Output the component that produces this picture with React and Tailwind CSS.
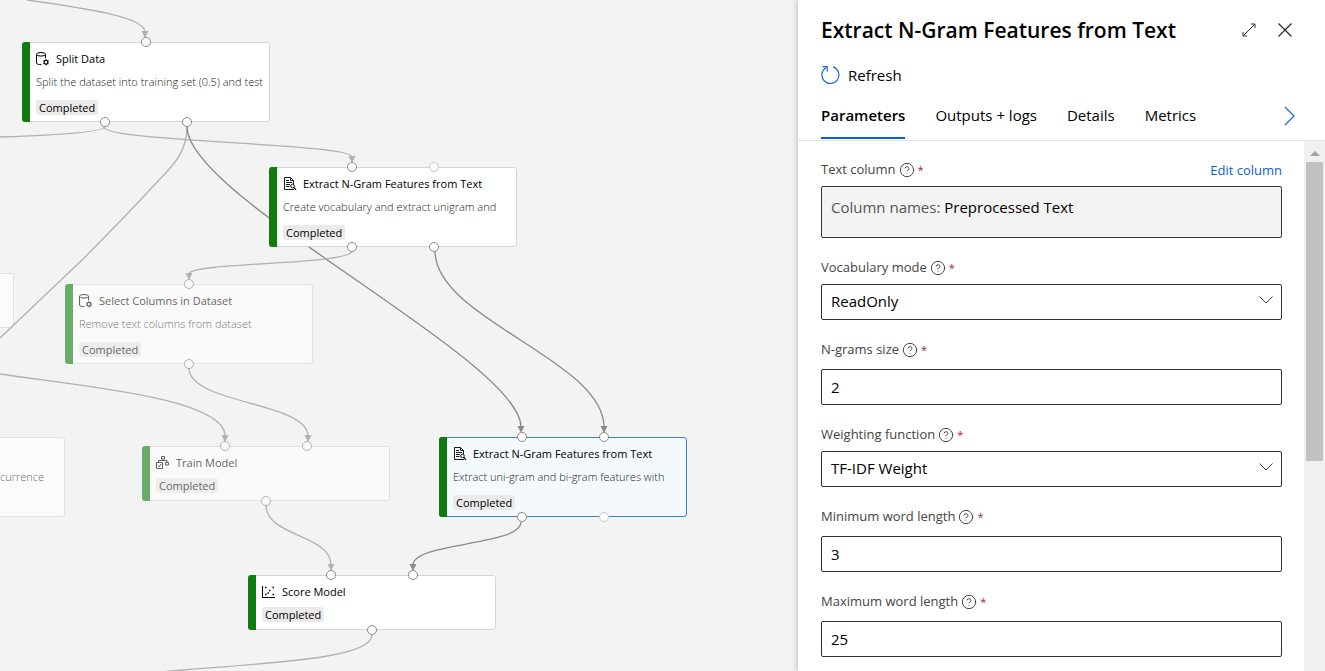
import { useState } from "react";
import { CircleQuestionMark } from "lucide-react";

const DIM = "#b1b1b1";
const STRONG = "#8a8a8a";

const edges = [
  { d: "M27 0 C85 8 145 17 145 32", color: DIM, tip: [145, 38] },
  { d: "M104 127 C104 132 60 135 0 137", color: DIM },
  { d: "M104 127 C104 142 352 143 352 157", color: DIM, tip: [352, 163] },
  { d: "M187 127 C187 150 175 164 159 180 C135 206 110 232 82 260 L0 338", color: DIM },
  { d: "M187 127 C187 198 521 360 521 427", color: STRONG, tip: [521, 433] },
  { d: "M435 251 C435 319 604 360 604 427", color: STRONG, tip: [604, 433] },
  { d: "M352 251 C352 265 189 262 189 274", color: DIM, tip: [189, 280] },
  { d: "M189 368 C189 404 308 402 308 436", color: DIM, tip: [308, 442] },
  { d: "M0 374 C80 386 225 398 225 436", color: DIM, tip: [225, 442] },
  { d: "M266 505 C266 537 331 534 331 565", color: DIM, tip: [331, 571] },
  { d: "M521 522 C521 546 413 542 413 565", color: STRONG, tip: [413, 571] },
  { d: "M372 635 C372 660 260 663 160 672", color: DIM },
];

const nodes = [
  {
    id: "split", title: "Split Data", icon: "data", place: "left-[22px] top-[42px]",
    text: "Split the dataset into training set (0.5) and test",
    inputs: ["left-1/2"], outputs: ["left-1/3", "left-2/3"],
  },
  {
    id: "ngram1", title: "Extract N-Gram Features from Text", icon: "doc", place: "left-[269px] top-[167px]",
    text: "Create vocabulary and extract unigram and",
    inputs: ["left-1/3", "left-2/3"], outputs: ["left-1/3", "left-2/3"], faintInput: 1,
  },
  {
    id: "select", title: "Select Columns in Dataset", icon: "data", place: "left-[65px] top-[284px]", dim: true,
    text: "Remove text columns from dataset",
    inputs: ["left-1/2"], outputs: ["left-1/2"],
  },
  {
    id: "train", title: "Train Model", icon: "train", place: "left-[142px] top-[446px]", dim: true,
    inputs: ["left-1/3", "left-2/3"], outputs: ["left-1/2"],
  },
  {
    id: "ngram2", title: "Extract N-Gram Features from Text", icon: "doc", place: "left-[439px] top-[437px]", selected: true,
    text: "Extract uni-gram and bi-gram features with",
    inputs: ["left-1/3", "left-2/3"], outputs: ["left-1/3", "left-2/3"], faintOutput: 1,
  },
  {
    id: "score", title: "Score Model", icon: "score", place: "left-[248px] top-[575px]",
    inputs: ["left-1/3", "left-2/3"], outputs: ["left-1/2"],
  },
];

function NodeIcon({ name }) {
  const props = {
    viewBox: "0 0 14 14", fill: "none", stroke: "currentColor", strokeWidth: 1, className: "w-3.5 h-3.5 shrink-0",
    "aria-hidden": true,
  };
  if (name === "data") {
    return (
      <svg {...props}>
        <ellipse cx="5" cy="2.300" rx="4.500" ry="1.800" />
        <path d="M.5 2.300v8.700c0 1 2 1.700 5 1.700M9.500 2.300v4" />
        <circle cx="10" cy="10.300" r="1.900" strokeWidth="1.200" />
        <path d="M10 7.300v1.200M10 12.100v1.200M7.400 8.800l1 .6M11.600 11.200l1 .6M7.400 11.800l1-.6M11.600 9.400l1-.6" />
      </svg>
    );
  }
  if (name === "doc") {
    return (
      <svg {...props} strokeWidth="0.9">
        <path d="M11 12.500H1.500V.5h6l3 3V7M7.500.5v3h3M3 3.500h3M3 5.500h6M3 7.500h4M3 9.500h3.500" />
        <circle cx="9.500" cy="9" r="1.800" />
        <path d="M10.800 10.400l2.200 2.500" strokeWidth="1.200" />
      </svg>
    );
  }
  if (name === "train") {
    return (
      <svg {...props}>
        <path d="M5.500.5h3v2.500h-3zM9.500 6.500h3v2.500h-3zM.5 6.500h6v6h-6zM7 3v1.500M2.500 6.500v-2h8.500v2" />
        <path d="M2 9.500l1.200 1.300L5.200 8" />
      </svg>
    );
  }
  return (
    <svg {...props}>
      <path d="M.5 1v12M.5 12.500H13" />
      <path
        d="M3 2.500h1.500M10.500 2.500H12M7 5.500h1.500M3 9.500h1.500M5.500 8h1.500M10.500 9.500H12"
        strokeWidth="1.500"
      />
    </svg>
  );
}

function Port({ side, left, faint }) {
  return (
    <span
      className={`absolute w-[10px] h-[10px] -ml-[5px] rounded-full border bg-white ${left} ${
        side === "top" ? "-top-[6px]" : "-bottom-[6px]"
      } ${faint ? "border-[#c8c8c8]" : "border-[#8a8a8a]"}`}
    />
  );
}

function Node({ node }) {
  return (
    <div className={`absolute w-[248px] ${node.place} ${node.dim ? "opacity-60" : ""}`}>
      <div
        className={`relative rounded-[3px] border ${
          node.selected ? "bg-[#f3f9fd] border-[#3b7fdc]" : "bg-white border-[#d6d6d6]"
        }`}
      >
        <div className="absolute -left-px -top-px -bottom-px w-[8px] rounded-l-[3px] bg-[#107c10]" />
        <div className={`pl-[13px] pr-2 pt-2 ${node.text ? "pb-[6px]" : "pb-[7px]"}`}>
          <div className="flex items-center gap-[6px] h-4 text-[11px] text-black">
            <NodeIcon name={node.icon} />
            <span className="whitespace-nowrap">{node.title}</span>
          </div>
          {node.text && (
            <p className="mt-[7px] h-4 text-[11px] leading-4 font-light text-[#222] whitespace-nowrap">{node.text}</p>
          )}
          <span className={`block w-fit h-[15px] px-[3px] rounded-[3px] bg-[#eaeaea] text-[11px] leading-[15px] text-black ${
            node.text ? "mt-[10px]" : "mt-[7px]"
          }`}>
            Completed
          </span>
        </div>
        {node.inputs.map((left, i) => (
          <Port key={left} side="top" left={left} faint={node.faintInput === i} />
        ))}
        {node.outputs.map((left, i) => (
          <Port key={left} side="bottom" left={left} faint={node.faintOutput === i} />
        ))}
      </div>
    </div>
  );
}

function Canvas() {
  return (
    <main className="relative flex-1 min-w-0 overflow-hidden bg-[#f3f3f3]">
      {/* nodes running off the left side */}
      <div className="absolute left-0 top-[273px] w-[14px] h-[55px] rounded-r-[3px] border border-l-0 border-[#e2e2e2] bg-[#fbfbfb]" />
      <div className="absolute left-0 top-[437px] w-[65px] h-[80px] pt-[31px] rounded-r-[3px] border border-l-0 border-[#e2e2e2] bg-[#fbfbfb]">
        <p className="text-[11px] leading-4 font-light text-[#6a6a6a]">currence</p>
      </div>

      <svg className="absolute inset-0 w-full h-full" fill="none" strokeWidth="1.3" aria-hidden="true">
        {edges.map((e) => (
          <g key={e.d}>
            <path d={e.d} stroke={e.color} />
            {e.tip && (
              <path d={`M${e.tip[0]} ${e.tip[1]}l-3.500 -7h7z`} fill={e.color} />
            )}
          </g>
        ))}
      </svg>

      {nodes.map((node) => (
        <Node key={node.id} node={node} />
      ))}
    </main>
  );
}

const tabs = ["Parameters", "Outputs + logs", "Details", "Metrics"];

function FieldLabel({ id, children }) {
  return (
    <label htmlFor={id} className="flex items-center gap-[3px] h-5 text-[13px] text-[#444]">
      {children}
      <CircleQuestionMark size={16} strokeWidth={1.5} />
      <span className="text-[#a4262c] text-[11px]">*</span>
    </label>
  );
}

function TextField({ id, label, value }) {
  return (
    <div>
      <FieldLabel id={id}>{label}</FieldLabel>
      <input
        id={id}
        type="text"
        defaultValue={value}
        className="block mt-[9px] w-full h-9 px-[9px] border border-[#323130] rounded-[2px] bg-white text-[15px] text-black"
      />
    </div>
  );
}

function SelectField({ id, label, options }) {
  return (
    <div>
      <FieldLabel id={id}>{label}</FieldLabel>
      <div className="relative mt-[6px]">
        <select
          id={id}
          className="block w-full h-9 px-[9px] pb-[2px] appearance-none border border-[#323130] rounded-[2px] bg-white text-[15px] text-black"
        >
          {options.map((o) => (
            <option key={o}>{o}</option>
          ))}
        </select>
        <svg viewBox="0 0 14 8" className="absolute right-[9px] top-[12px] w-3.5 h-2 pointer-events-none" fill="none" stroke="#444" aria-hidden="true">
          <path d="M.5.5L7 7 13.500.5" />
        </svg>
      </div>
    </div>
  );
}

function DetailsPanel() {
  const [tab, setTab] = useState("Parameters");

  return (
    <aside className="relative flex flex-col w-[527px] shrink-0 bg-white shadow-[0_0_6px_rgba(0,0,0,0.3)]">
      <header className="border-b border-[#e5e5e5] pl-[23px] pr-[30px]">
        <div className="flex items-center pt-[14px] h-[46px]">
          <h1 className="flex-1 pt-[2px] text-[21px] font-semibold text-black whitespace-nowrap">Extract N-Gram Features from Text</h1>
          <button aria-label="Expand" className="mr-[21px]">
            <svg viewBox="0 0 14 14" className="w-3.5 h-3.5" fill="none" stroke="#333">
              <path d="M1 13L13 1M9 1h4v4M1 9v4h4" />
            </svg>
          </button>
          <button aria-label="Close" className="mr-[2px]">
            <svg viewBox="0 0 16 16" className="w-4 h-4" fill="none" stroke="#222" strokeWidth="1.100">
              <path d="M1.500 1.500l13 13M14.500 1.500l-13 13" />
            </svg>
          </button>
        </div>

        <button className="flex items-center gap-[8px] mt-[19px] h-5 text-[15px] text-black">
          <svg viewBox="0 0 19 19" className="w-[19px] h-[19px]" fill="none" stroke="#2266dd" strokeWidth="1.200">
            <path d="M12 .9A8.500 8.500 0 1 1 5 1.700M1.500 .7h4.800v4.800" />
          </svg>
          Refresh
        </button>

        <div className="flex justify-between mt-[11px] h-11">
          <div role="tablist" className="flex gap-[30px] h-full">
            {tabs.map((t) => (
              <button
                key={t}
                role="tab"
                aria-selected={t === tab}
                onClick={() => setTab(t)}
                className={`h-[43px] pb-[3px] text-[15px] text-black whitespace-nowrap border-b-2 ${
                  t === tab ? "font-semibold border-[#0b5cd7]" : "border-transparent"
                }`}
              >
                {t}
              </button>
            ))}
          </div>
          <button aria-label="More tabs" className="h-10">
            <svg viewBox="0 0 11 20" className="w-[11px] h-5" fill="none" stroke="#2266dd" strokeWidth="1.300">
              <path d="M1 1l9 9-9 9" />
            </svg>
          </button>
        </div>
      </header>

      <div className="flex flex-1 min-h-0">
        <div className="flex-1 min-w-0 overflow-hidden pl-[23px] pr-[22px] pt-[19px] space-y-5">
          <div>
            <div className="flex items-center justify-between">
              <FieldLabel id="text-column">Text column</FieldLabel>
              <a href="#edit" className="text-[13px] leading-5 text-[#0b5cd7]">Edit column</a>
            </div>
            <output id="text-column" className="block mt-[6px] h-[52px] pl-[9px] pt-2 border border-[#323130] rounded-[2px] bg-[#f3f3f3] text-[15px] leading-6 text-black">
              <span className="text-[#555]">Column names:</span> Preprocessed Text
            </output>
          </div>
          <SelectField id="vocabulary-mode" label="Vocabulary mode" options={["ReadOnly", "Create"]} />
          <TextField id="ngrams-size" label="N-grams size" value="2" />
          <SelectField id="weighting" label="Weighting function" options={["TF-IDF Weight", "Binary Weight"]} />
          <TextField id="min-length" label="Minimum word length" value="3" />
          <TextField id="max-length" label="Maximum word length" value="25" />
        </div>

        {/* scrollbar */}
        <div className="flex flex-col items-center w-[21px] bg-[#f0f0f0]">
          <div className="flex items-center justify-center h-[21px]">
            <svg viewBox="0 0 10 5" className="mt-1 w-2.5 h-[5px]" fill="#a0a0a0" aria-hidden="true">
              <path d="M5 0l5 5H0z" />
            </svg>
          </div>
          <div className="w-[17px] h-[299px] bg-[#c1c1c1]" />
        </div>
      </div>
    </aside>
  );
}

export default function App() {
  return (
    <div className="flex h-screen overflow-hidden font-['Open_Sans','Noto_Sans',sans-serif]">
      <Canvas />
      <DetailsPanel />
    </div>
  );
}
